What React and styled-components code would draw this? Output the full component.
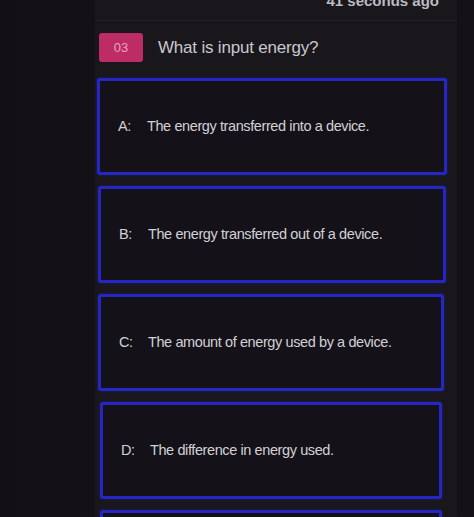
import React from "react";
import styled, { createGlobalStyle } from "styled-components";

const GlobalStyle = createGlobalStyle`
  html, body {
    margin: 0;
    padding: 0;
    background: #141216;
    font-family: 'Liberation Sans', Arial, sans-serif;
  }
`;

const Page = styled.div`
  display: flex;
  width: 474px;
  height: 517px;
  overflow: hidden;
  background: linear-gradient(90deg, #121014 0%, #161418 60%, #141216 100%);
`;

const Gutter = styled.div`
  width: 95px;
  flex-shrink: 0;
`;

const Panel = styled.div`
  width: 362px;
  flex-shrink: 0;
  background: #19171c;
  display: flex;
  flex-direction: column;
  & > * {
    flex-shrink: 0;
  }
`;

const TopStrip = styled.div`
  height: 20px;
  border-bottom: 1px solid #232127;
  display: flex;
  justify-content: flex-end;
  align-items: flex-end;
  padding-right: 18px;
  overflow: hidden;
`;

const Timestamp = styled.span`
  font-size: 15px;
  font-weight: 700;
  color: #bdbbc2;
  line-height: 15px;
  margin-bottom: 12px;
`;

const QuestionRow = styled.div`
  display: flex;
  align-items: center;
  gap: 15px;
  padding: 12px 0 0 4px;
  height: 29px;
`;

const Badge = styled.div`
  width: 44px;
  height: 29px;
  border-radius: 3px;
  background: #bd2c64;
  color: #e7a3bf;
  font-size: 13px;
  display: flex;
  align-items: center;
  justify-content: center;
`;

const Question = styled.div`
  font-size: 17px;
  color: #c9c8cc;
  letter-spacing: -0.2px;
`;

const Options = styled.div`
  display: flex;
  flex-direction: column;
  gap: 11px;
  padding: 16px 0 0 2px;
`;

const Option = styled.div`
  width: ${({ $w }) => $w}px;
  height: 97px;
  flex-shrink: 0;
  box-sizing: border-box;
  margin-left: ${({ $ml }) => $ml}px;
  border: 3px solid #2626c4;
  border-radius: 3px;
  background: #141218;
  box-shadow: 0 0 3px rgba(40, 40, 200, 0.45);
  display: flex;
  align-items: center;
  padding: 0 0 2px 18px;
  font-size: 14.5px;
  color: #d2d0d5;
  letter-spacing: -0.4px;
`;

const Letter = styled.span`
  width: 29px;
  flex-shrink: 0;
`;

const options = [
  { l: "A:", t: "The energy transferred into a device.", w: 350, ml: 0 },
  { l: "B:", t: "The energy transferred out of a device.", w: 348, ml: 1 },
  { l: "C:", t: "The amount of energy used by a device.", w: 346, ml: 1 },
  { l: "D:", t: "The difference in energy used.", w: 342, ml: 3 },
  { l: "", t: "", w: 342, ml: 3 },
];

export default function App() {
  return (
    <>
      <GlobalStyle />
      <Page>
        <Gutter />
        <Panel>
          <TopStrip>
            <Timestamp>41 seconds ago</Timestamp>
          </TopStrip>
          <QuestionRow>
            <Badge>03</Badge>
            <Question>What is input energy?</Question>
          </QuestionRow>
          <Options>
            {options.map((o, i) => (
              <Option key={i} $w={o.w} $ml={o.ml}>
                <Letter>{o.l}</Letter>
                {o.t}
              </Option>
            ))}
          </Options>
        </Panel>
      </Page>
    </>
  );
}
